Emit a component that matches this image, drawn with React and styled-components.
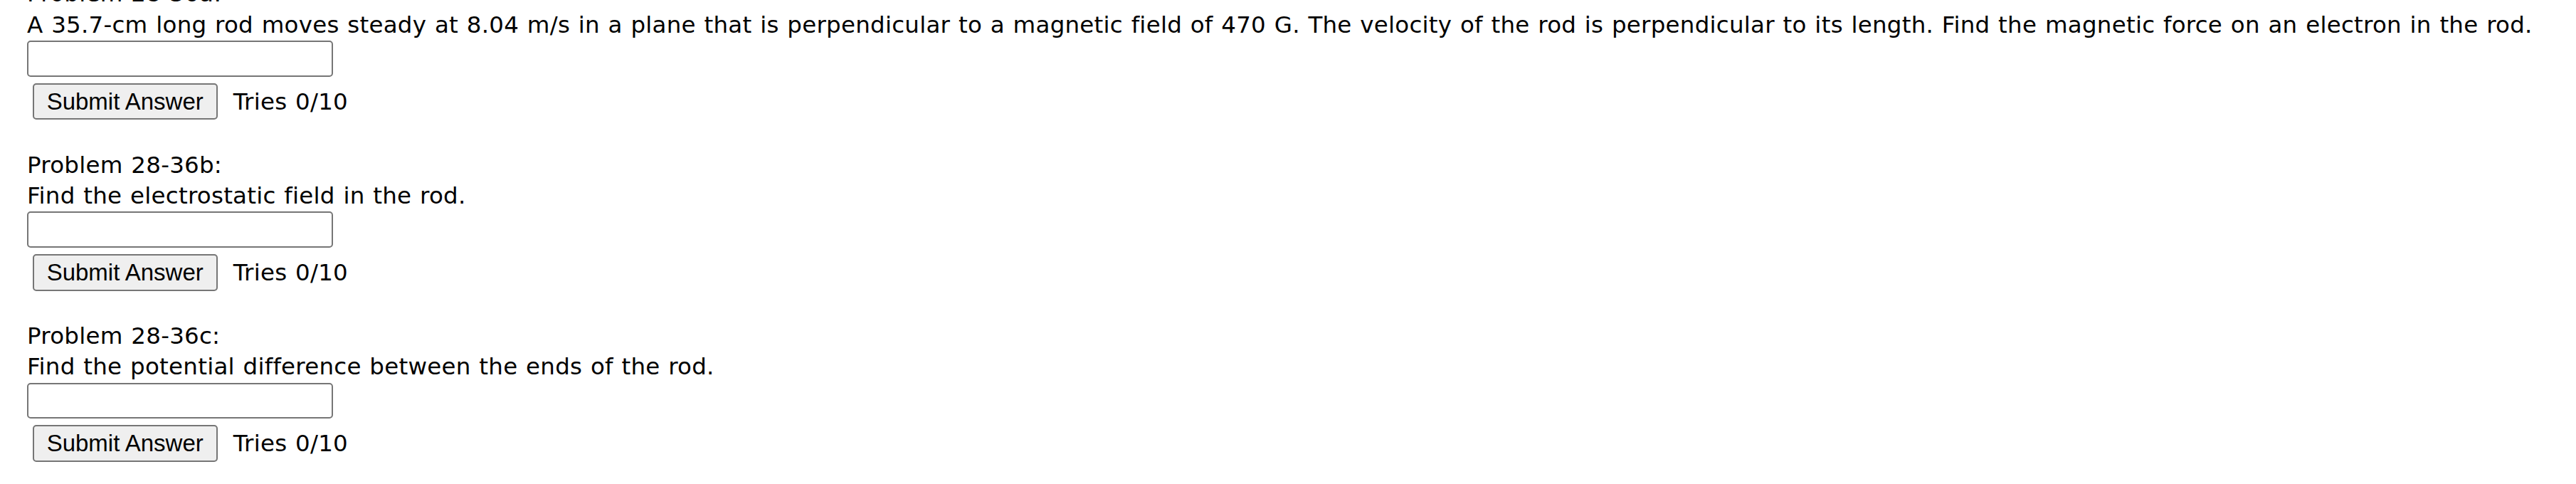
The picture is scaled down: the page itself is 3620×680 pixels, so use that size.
import React from 'react';
import styled, { createGlobalStyle } from 'styled-components';

const GlobalStyle = createGlobalStyle`
    html, body {
        margin: 0;
        background: #fff;
    }
`;

const Page = styled.div`
    margin-top: -29.7px;
    padding-left: 38px;
    font-family: "DejaVu Sans", Verdana, sans-serif;
    font-size: 32.5px;
    line-height: 43.4px;
    letter-spacing: 0.25px;
    word-spacing: 1.1px;
    color: #000;
`;

const Problem = styled.div`
    margin-bottom: 42.3px;
`;

const Line = styled.div`
    white-space: nowrap;
`;

const AnswerInput = styled.input`
    display: block;
    box-sizing: border-box;
    width: 430px;
    height: 50.5px;
    margin: 0;
    padding: 0 6px;
    border: 2px solid #767676;
    border-radius: 5px;
    background: #fff;
    font-size: 32px;
`;

const SubmitRow = styled.div`
    display: flex;
    align-items: baseline;
    gap: 22px;
    margin-top: 9.2px;
    padding-left: 7.7px;
`;

const SubmitButton = styled.button`
    box-sizing: border-box;
    width: 260px;
    height: 51.5px;
    padding: 0;
    border: 2px solid #767676;
    border-radius: 5px;
    background: #efefef;
    color: #000;
    font-family: "Liberation Sans", Arial, sans-serif;
    font-size: 33px;
    letter-spacing: normal;
    word-spacing: normal;
`;

const problems = [
    {
        id: '28-36a',
        text: 'A 35.7-cm long rod moves steady at 8.04 m/s in a plane that is perpendicular to a magnetic field of 470 G. The velocity of the rod is perpendicular to its length. Find the magnetic force on an electron in the rod.',
    },
    { id: '28-36b', text: 'Find the electrostatic field in the rod.' },
    { id: '28-36c', text: 'Find the potential difference between the ends of the rod.' },
];

export default function App() {
    return (
        <>
            <GlobalStyle />
            <Page>
                {problems.map(p => (
                    <Problem key={p.id}>
                        <Line>{`Problem ${p.id}:`}</Line>
                        <Line>{p.text}</Line>
                        <AnswerInput type="text" />
                        <SubmitRow>
                            <SubmitButton>Submit Answer</SubmitButton>
                            <span>Tries 0/10</span>
                        </SubmitRow>
                    </Problem>
                ))}
            </Page>
        </>
    );
}
